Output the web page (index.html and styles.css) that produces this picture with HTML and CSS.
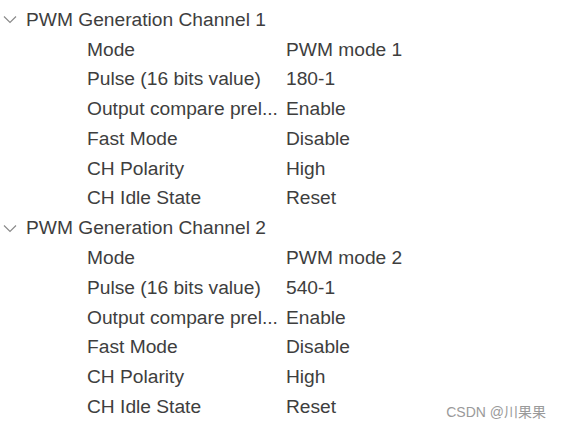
FILE: index.html
```html
<!DOCTYPE html>
<html lang="en">
<head>
    <meta charset="UTF-8">
    <meta name="viewport" content="width=device-width, initial-scale=1.0">
    <title>PWM Generation</title>
    <link rel="stylesheet" href="styles.css">
</head>
<body>
    <div class="tree">
        <div class="group">
            <div class="group-head">
                <svg class="chevron" width="14" height="9" viewBox="0 0 14 9"><path d="M1 1.5 L7 7.5 L13 1.5" fill="none" stroke="#8a8a8a" stroke-width="1.2"/></svg>
                <span>PWM Generation Channel 1</span>
            </div>
            <div class="param"><span class="name">Mode</span><span class="value">PWM mode 1</span></div>
            <div class="param"><span class="name">Pulse (16 bits value)</span><span class="value">180-1</span></div>
            <div class="param"><span class="name">Output compare prel...</span><span class="value">Enable</span></div>
            <div class="param"><span class="name">Fast Mode</span><span class="value">Disable</span></div>
            <div class="param"><span class="name">CH Polarity</span><span class="value">High</span></div>
            <div class="param"><span class="name">CH Idle State</span><span class="value">Reset</span></div>
        </div>
        <div class="group">
            <div class="group-head">
                <svg class="chevron" width="14" height="9" viewBox="0 0 14 9"><path d="M1 1.5 L7 7.5 L13 1.5" fill="none" stroke="#8a8a8a" stroke-width="1.2"/></svg>
                <span>PWM Generation Channel 2</span>
            </div>
            <div class="param"><span class="name">Mode</span><span class="value">PWM mode 2</span></div>
            <div class="param"><span class="name">Pulse (16 bits value)</span><span class="value">540-1</span></div>
            <div class="param"><span class="name">Output compare prel...</span><span class="value">Enable</span></div>
            <div class="param"><span class="name">Fast Mode</span><span class="value">Disable</span></div>
            <div class="param"><span class="name">CH Polarity</span><span class="value">High</span></div>
            <div class="param"><span class="name">CH Idle State</span><span class="value">Reset</span></div>
        </div>
    </div>
    <div class="watermark">CSDN @川果果</div>
</body>
</html>
```

FILE: styles.css
```css
body {
    margin: 0;
    padding: 5px 0 0 0;
    background: #fff;
    font-family: "Liberation Sans", Arial, sans-serif;
    font-size: 19.2px;
    color: #3e3e3e;
    position: relative;
    height: 425px;
    overflow: hidden;
}
.group-head, .param {
    height: 29.77px;
    display: flex;
    align-items: center;
    white-space: nowrap;
}
.chevron {
    margin: 0 9px 0 3px;
}
.param {
    padding-left: 87px;
}
.name {
    width: 199px;
    flex-shrink: 0;
}
.watermark {
    position: absolute;
    right: 16px;
    top: 401px;
    font-family: "Liberation Sans", "Noto Sans CJK SC", sans-serif;
    font-size: 14px;
    color: #9a9a9a;
}
```
